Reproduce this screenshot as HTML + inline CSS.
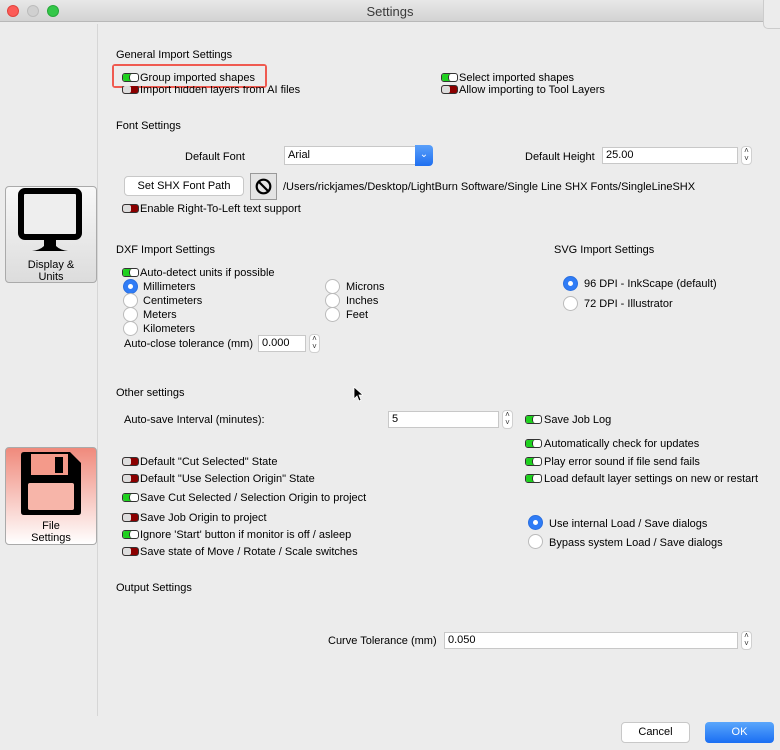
<!DOCTYPE html>
<html><head><style>
*{box-sizing:border-box;margin:0;padding:0}
body{width:780px;height:750px;background:#ececec;font-family:"Liberation Sans",sans-serif;font-size:11px;color:#000;position:relative;overflow:hidden}
.a{position:absolute;white-space:nowrap;line-height:13px;margin-top:1px}
.h{font-size:11px}
.tg{position:absolute;width:17px;height:9px;border:1px solid #333;border-radius:3px;overflow:hidden;background:#fff}
.tg i{position:absolute;left:0;top:0;width:8px;height:7px}
.tg.on i{background:#1fd11f}
.tg.off{background:#8b0000}
.tg.off i{background:#ddd;border-radius:2px}
.tg.on b{position:absolute;right:0;top:0;width:9px;height:7px;border-radius:3px;background:#fff;border-left:1px solid #333}
.rb{position:absolute;width:15px;height:15px;border-radius:50%;background:#fff;border:1px solid #bbb}
.rb.s{background:#2f7cf6;border-color:#2a6fe0}
.rb.s:after{content:"";position:absolute;left:4px;top:4px;width:5px;height:5px;border-radius:50%;background:#fff}
.in{position:absolute;height:17px;background:#fff;border:1px solid #c8c8c8;padding-left:3px;line-height:15px}
.sp{position:absolute;width:11px;height:19px;background:#fff;border:1px solid #d0d0d0;border-radius:4px;font-size:8px;line-height:8px;text-align:center;color:#333}
.btn{position:absolute;background:#fff;border:1px solid #c8c8c8;border-radius:4px;text-align:center}
</style></head><body>
<div style="position:absolute;left:0;top:0;width:780px;height:22px;background:linear-gradient(#e8e8e8,#d3d3d3);border-bottom:1px solid #b8b8b8"></div>
<div class="a" style="left:0;width:780px;top:4px;text-align:center;font-size:13px;color:#3a3a3a;line-height:15px;margin:0">Settings</div>
<div style="position:absolute;left:7px;top:5px;width:12px;height:12px;border-radius:50%;background:#fc5b57;border:1px solid #e0443e"></div>
<div style="position:absolute;left:27px;top:5px;width:12px;height:12px;border-radius:50%;background:#d0d0d0;border:1px solid #bcbcbc"></div>
<div style="position:absolute;left:47px;top:5px;width:12px;height:12px;border-radius:50%;background:#33c748;border:1px solid #27a83a"></div>
<div style="position:absolute;left:763px;top:-4px;width:30px;height:33px;border-radius:5px;background:#ececec;border:1px solid #ccc"></div>
<div style="position:absolute;left:97px;top:24px;width:1px;height:692px;background:#d6d6d6"></div>

<div style="position:absolute;left:5px;top:186px;width:92px;height:97px;border:1px solid #aaa;border-radius:4px;background:linear-gradient(#f8f8f8,#dcdcdc)"></div>
<svg style="position:absolute;left:18px;top:188px" width="66" height="68"><rect x="3" y="3" width="58" height="46" rx="4" fill="#eee" stroke="#000" stroke-width="6"/><path d="M26 52 L26 58 Q22 62 14 63 L50 63 Q42 62 38 58 L38 52Z" fill="#000"/></svg>
<div class="a" style="left:5px;width:92px;text-align:center;top:258px;line-height:12px">Display &amp;<br>Units</div>
<div style="position:absolute;left:5px;top:447px;width:92px;height:98px;border:1px solid #aaa;border-radius:4px;background:linear-gradient(#f08a7c,#fff)"></div>
<svg style="position:absolute;left:18px;top:450px" width="66" height="68"><path d="M3 5 Q3 2 6 2 L52 2 L63 13 L63 62 Q63 65 60 65 L6 65 Q3 65 3 62Z" fill="#000"/><rect x="13" y="4" width="37" height="21" fill="#f49a8a"/><rect x="37" y="7" width="8" height="16" fill="#000"/><rect x="10" y="33" width="46" height="27" rx="2" fill="#f7b5a9"/></svg>
<div class="a" style="left:5px;width:92px;text-align:center;top:519px;line-height:12px">File<br>Settings</div>

<div class="a h" style="left:116px;top:48px">General Import Settings</div>
<div style="position:absolute;left:112px;top:64px;width:155px;height:24px;border:2px solid #ef5a50;border-radius:3px"></div>
<div class="tg off" style="left:122px;top:85px"><i></i></div>
<div class="a" style="left:140px;top:83px">Import hidden layers from AI files</div>
<div style="position:absolute;left:114px;top:66px;width:151px;height:20px;background:#ececec"></div>
<div class="tg on" style="left:122px;top:73px"><i></i><b></b></div>
<div class="a" style="left:140px;top:71px">Group imported shapes</div>
<div class="tg on" style="left:441px;top:73px"><i></i><b></b></div>
<div class="a" style="left:459px;top:71px">Select imported shapes</div>
<div class="tg off" style="left:441px;top:85px"><i></i></div>
<div class="a" style="left:459px;top:83px">Allow importing to Tool Layers</div>

<div class="a h" style="left:116px;top:119px">Font Settings</div>
<div class="a" style="left:185px;top:150px">Default Font</div>
<div class="in" style="left:284px;top:146px;width:140px;height:19px;line-height:17px">Arial</div>
<div style="position:absolute;left:415px;top:145px;width:18px;height:21px;background:linear-gradient(#5aa0fa,#1f6ff0);border-radius:0 4px 4px 0;color:#fff;text-align:center;font-size:10px;line-height:20px">&#8964;</div>
<div class="a" style="left:525px;top:150px">Default Height</div>
<div class="in" style="left:602px;top:147px;width:136px">25.00</div>
<div class="sp" style="left:741px;top:146px">&#708;<br>&#709;</div>
<div class="btn" style="left:124px;top:176px;width:120px;height:20px;line-height:18px">Set SHX Font Path</div>
<div style="position:absolute;left:250px;top:173px;width:27px;height:27px;border:1px solid #999;background:#e4e4e4"></div>
<svg style="position:absolute;left:255px;top:178px" width="17" height="17"><circle cx="8.5" cy="8.5" r="6.8" fill="none" stroke="#000" stroke-width="2.2"/><line x1="4" y1="4" x2="13" y2="13" stroke="#000" stroke-width="2.2"/></svg>
<div class="a" style="left:283px;top:180px">/Users/rickjames/Desktop/LightBurn Software/Single Line SHX Fonts/SingleLineSHX</div>
<div class="tg off" style="left:122px;top:204px"><i></i></div>
<div class="a" style="left:140px;top:202px">Enable Right-To-Left text support</div>

<div class="a h" style="left:116px;top:243px">DXF Import Settings</div>
<div class="tg on" style="left:122px;top:268px"><i></i><b></b></div>
<div class="a" style="left:140px;top:266px">Auto-detect units if possible</div>
<div class="rb s" style="left:123px;top:279px"></div><div class="a" style="left:143px;top:280px">Millimeters</div>
<div class="rb" style="left:123px;top:293px"></div><div class="a" style="left:143px;top:294px">Centimeters</div>
<div class="rb" style="left:123px;top:307px"></div><div class="a" style="left:143px;top:308px">Meters</div>
<div class="rb" style="left:123px;top:321px"></div><div class="a" style="left:143px;top:322px">Kilometers</div>
<div class="rb" style="left:325px;top:279px"></div><div class="a" style="left:346px;top:280px">Microns</div>
<div class="rb" style="left:325px;top:293px"></div><div class="a" style="left:346px;top:294px">Inches</div>
<div class="rb" style="left:325px;top:307px"></div><div class="a" style="left:346px;top:308px">Feet</div>
<div class="a" style="left:124px;top:337px">Auto-close tolerance (mm)</div>
<div class="in" style="left:258px;top:335px;width:48px">0.000</div>
<div class="sp" style="left:309px;top:334px">&#708;<br>&#709;</div>

<div class="a h" style="left:554px;top:243px">SVG Import Settings</div>
<div class="rb s" style="left:563px;top:276px"></div><div class="a" style="left:584px;top:277px">96 DPI - InkScape (default)</div>
<div class="rb" style="left:563px;top:296px"></div><div class="a" style="left:584px;top:297px">72 DPI - Illustrator</div>

<svg style="position:absolute;left:353px;top:386px" width="10" height="16"><path d="M1 1 L1 13 L4 10 L6 15 L8 14 L6 9 L10 9Z" fill="#000" stroke="#fff" stroke-width="0.8"/></svg>

<div class="a h" style="left:116px;top:386px">Other settings</div>
<div class="a" style="left:124px;top:413px">Auto-save Interval (minutes):</div>
<div class="in" style="left:388px;top:411px;width:111px">5</div>
<div class="sp" style="left:502px;top:410px">&#708;<br>&#709;</div>
<div class="tg on" style="left:525px;top:415px"><i></i><b></b></div><div class="a" style="left:544px;top:413px">Save Job Log</div>
<div class="tg on" style="left:525px;top:439px"><i></i><b></b></div><div class="a" style="left:544px;top:437px">Automatically check for updates</div>
<div class="tg on" style="left:525px;top:457px"><i></i><b></b></div><div class="a" style="left:544px;top:455px">Play error sound if file send fails</div>
<div class="tg on" style="left:525px;top:474px"><i></i><b></b></div><div class="a" style="left:544px;top:472px">Load default layer settings on new or restart</div>
<div class="rb s" style="left:528px;top:515px"></div><div class="a" style="left:549px;top:517px">Use internal Load / Save dialogs</div>
<div class="rb" style="left:528px;top:534px"></div><div class="a" style="left:549px;top:536px">Bypass system Load / Save dialogs</div>

<div class="tg off" style="left:122px;top:457px"><i></i></div><div class="a" style="left:140px;top:455px">Default "Cut Selected" State</div>
<div class="tg off" style="left:122px;top:474px"><i></i></div><div class="a" style="left:140px;top:472px">Default "Use Selection Origin" State</div>
<div class="tg on" style="left:122px;top:493px"><i></i><b></b></div><div class="a" style="left:140px;top:491px">Save Cut Selected / Selection Origin to project</div>
<div class="tg off" style="left:122px;top:513px"><i></i></div><div class="a" style="left:140px;top:511px">Save Job Origin to project</div>
<div class="tg on" style="left:122px;top:530px"><i></i><b></b></div><div class="a" style="left:140px;top:528px">Ignore 'Start' button if monitor is off / asleep</div>
<div class="tg off" style="left:122px;top:547px"><i></i></div><div class="a" style="left:140px;top:545px">Save state of Move / Rotate / Scale switches</div>

<div class="a h" style="left:116px;top:581px">Output Settings</div>
<div class="a" style="left:328px;top:634px">Curve Tolerance (mm)</div>
<div class="in" style="left:444px;top:632px;width:294px">0.050</div>
<div class="sp" style="left:741px;top:631px">&#708;<br>&#709;</div>

<div class="btn" style="left:621px;top:722px;width:69px;height:21px;line-height:19px">Cancel</div>
<div style="position:absolute;left:705px;top:722px;width:69px;height:21px;line-height:21px;border-radius:4px;background:linear-gradient(#5aa6fb,#1a6ef3);color:#fff;text-align:center">OK</div>
</body></html>
